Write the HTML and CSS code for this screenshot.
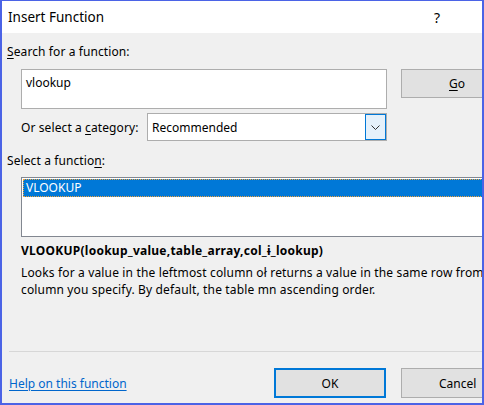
FILE: index.html
```html
<!DOCTYPE html>
<html>
<head>
    <title>Insert Function</title>
    <link rel="stylesheet" href="styles.css">
</head>
<body>
    <div class="dialog">
        <div class="titlebar">
            <span class="title">Insert Function</span>
            <span class="help-btn">?</span>
        </div>

        <div class="content">
            <div class="label first"><u>S</u>earch for a function:</div>

            <div class="search-row">
                <div class="textbox">vlookup</div>
                <button class="btn go-btn" type="button"><u>G</u>o</button>
            </div>

            <div class="category-row">
                <span class="category-label">Or select a <u>c</u>ategory:</span>
                <div class="select">
                    <span class="select-value">Recommended</span>
                    <span class="select-arrow">
                        <svg width="9" height="5" viewBox="0 0 9 5">
                            <path d="M0.5 0.5 L4.5 4.5 L8.5 0.5" fill="none" stroke="#333" stroke-width="1"/>
                        </svg>
                    </span>
                </div>
            </div>

            <div class="label fn-label">Select a functio<u>n</u>:</div>

            <div class="listbox">
                <div class="list-item selected">VLOOKUP</div>
            </div>

            <div class="signature">VLOOKUP(lookup_value,table_array,col_ɨ_lookup)</div>
            <div class="description">
                <div class="desc-line">Looks for a value in the leftmost column oł returns a value in the same row from a</div>
                <div class="desc-line">column you specify. By default, the table mn ascending order.</div>
            </div>

            <div class="separator"></div>

            <div class="footer">
                <a class="help-link" href="#">Help on this function</a>
                <div class="footer-buttons">
                    <button class="btn ok-btn" type="button">OK</button>
                    <button class="btn cancel-btn" type="button">Cancel</button>
                </div>
            </div>
        </div>
    </div>
</body>
</html>
```

FILE: styles.css
```css
html, body {
    margin: 0;
    padding: 0;
}

body {
    font-family: "Noto Sans", "Open Sans", sans-serif;
    font-size: 12px;
    color: #000;
    background-color: #f0f0f0;
}

.dialog {
    width: 484px;
    height: 405px;
    box-sizing: border-box;
    border: 1px solid #4b63e6;
    border-width: 1px 2px 2px 2px;
    background-color: #f0f0f0;
    overflow: hidden;
}

.titlebar {
    height: 32px;
    background-color: #fff;
    display: flex;
    align-items: center;
    padding-left: 6px;
    font-size: 13.5px;
}

.title {
    width: 426px;
}

.help-btn {
    font-size: 14px;
}

.content {
    width: 600px;
    padding-left: 5px;
}

.label {
    line-height: 16px;
    height: 16px;
    letter-spacing: 0.1px;
}

.first {
    margin-top: 11px;
}

u {
    text-decoration: underline;
    text-underline-offset: 2px;
}

.search-row {
    display: flex;
    align-items: flex-start;
    margin-top: 9px;
}

.textbox {
    margin-left: 14px;
    width: 366px;
    height: 40px;
    box-sizing: border-box;
    border: 1px solid #adadad;
    background-color: #fff;
    padding: 5px 4px;
    line-height: 16px;
}

.btn {
    font-family: "Noto Sans", "Open Sans", sans-serif;
    font-size: 12px;
    color: #000;
    background-color: #e1e1e1;
    border: 1px solid #adadad;
    padding: 0;
    box-sizing: border-box;
}

.go-btn {
    margin-left: 14px;
    width: 100px;
    height: 29px;
    text-align: left;
    padding-left: 47px;
}

.category-row {
    display: flex;
    align-items: center;
    margin-top: 4px;
}

.category-label {
    margin-left: 14px;
    width: 126px;
    letter-spacing: 0.1px;
}

.select {
    width: 240px;
    height: 28px;
    box-sizing: border-box;
    border: 1px solid #adadad;
    background-color: #fff;
    display: flex;
    align-items: center;
}

.select-value {
    flex: 1;
    padding-left: 4px;
    font-size: 12px;
}

.select-arrow {
    width: 21px;
    height: 26px;
    box-sizing: border-box;
    border: 1px solid #0078d7;
    background-color: #e5f1fb;
    display: flex;
    align-items: center;
    justify-content: center;
}

.fn-label {
    margin-top: 12px;
}

.listbox {
    margin-top: 8px;
    margin-left: 14px;
    height: 60px;
    box-sizing: border-box;
    border: 1px solid #828790;
    background-color: #fff;
    padding: 1px;
}

.list-item {
    height: 18px;
    line-height: 16px;
    box-sizing: border-box;
    padding-left: 2px;
}

.selected {
    background-color: #0078d7;
    color: #fff;
    border: 1px dotted #f0a23c;
}

.signature {
    margin-top: 6px;
    margin-left: 14px;
    font-weight: bold;
    line-height: 16px;
    height: 16px;
    letter-spacing: 0.25px;
}

.description {
    margin-top: 5px;
    margin-left: 14px;
    height: 87px;
    width: 466px;
    overflow: hidden;
}

.desc-line {
    line-height: 17px;
    white-space: nowrap;
    letter-spacing: 0.15px;
}

.separator {
    height: 1px;
    background-color: #d7d7d7;
    margin-left: 2px;
}

.footer {
    display: flex;
    align-items: center;
    margin-top: 16px;
}

.help-link {
    color: #0066cc;
    text-decoration: underline;
    text-underline-offset: 2px;
    width: 265px;
    margin-left: 2px;
}

.footer-buttons {
    display: flex;
    gap: 15px;
}

.ok-btn {
    width: 112px;
    height: 30px;
    border: 2px solid #0078d7;
}

.cancel-btn {
    width: 100px;
    height: 30px;
    text-align: left;
    padding-left: 37px;
}
```
